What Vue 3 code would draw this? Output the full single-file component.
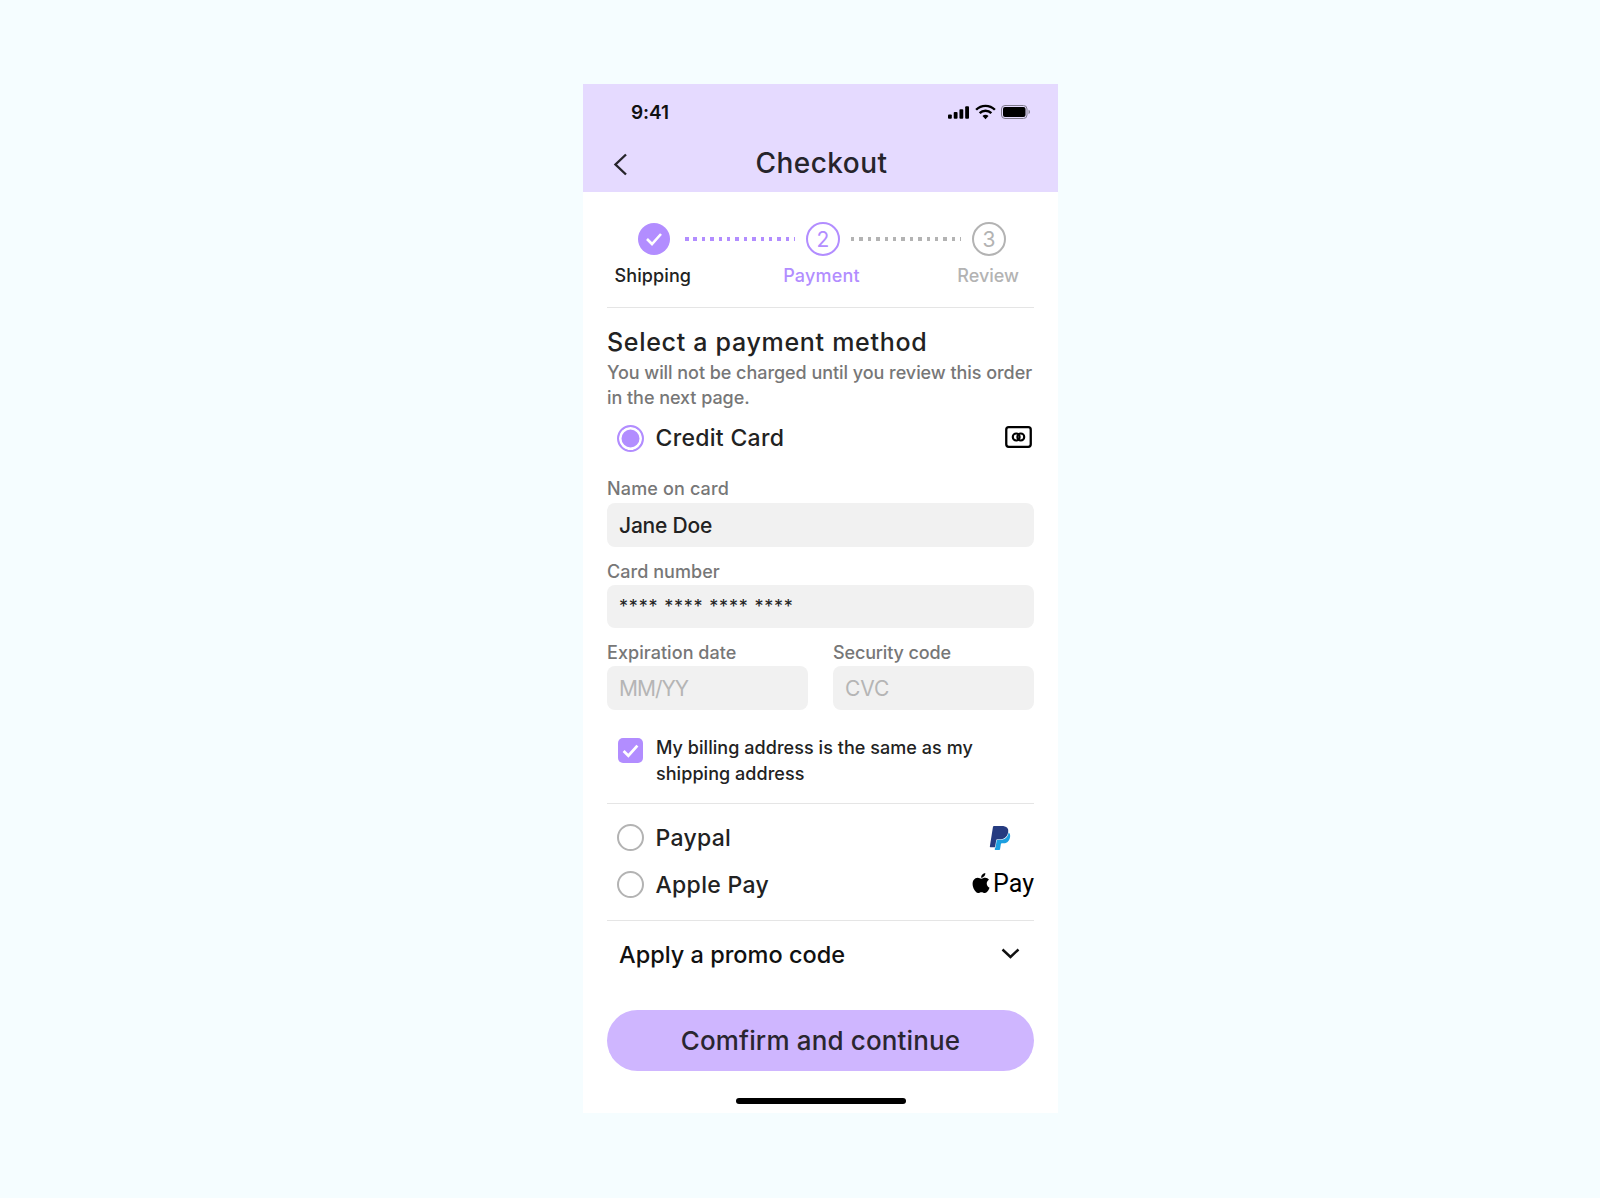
<script setup>
const steps = [
  { label: 'Shipping', cls: 'done' },
  { label: 'Payment', cls: 'active' },
  { label: 'Review', cls: 'todo' }
]
</script>

<template>
  <div class="phone">
    <header class="top">
      <div class="status">
        <span class="time">9:41</span>
        <div class="status-icons">
          <svg width="21" height="13" viewBox="0 0 22 13"><rect x="0" y="8.5" width="4" height="4.5" rx="1"/><rect x="6" y="6" width="4" height="7" rx="1"/><rect x="12" y="3" width="4" height="10" rx="1"/><rect x="18" y="0" width="4" height="13" rx="1"/></svg>
          <svg width="21" height="15.5" viewBox="0 0 19 14" fill="none" stroke="#000" stroke-width="2.2"><path d="M1 5.2a12 12 0 0 1 17 0"/><path d="M4.2 8.3a7.6 7.6 0 0 1 10.6 0"/><path d="M9.5 13.8l-2.7-2.9a3.8 3.8 0 0 1 5.4 0z" fill="#000" stroke="none"/></svg>
          <svg width="29" height="14" viewBox="0 0 29 14"><rect x=".5" y=".5" width="25.5" height="13" rx="3.5" fill="none" stroke="#7f7a8c"/><rect x="2" y="2" width="22.5" height="10" rx="2"/><path d="M27.5 4.8a2.3 2.3 0 0 1 0 4.4z" fill="#8d889a"/></svg>
        </div>
      </div>
      <div class="title-row">
        <svg class="back" width="15" height="23" viewBox="0 0 15 23" fill="none" stroke="#26242b" stroke-width="2.4"><path d="M13 1.5 2.5 11.5 13 21.5"/></svg>
        <h1>Checkout</h1>
      </div>
    </header>

    <main class="body">
      <div class="track">
        <span class="c c-done">
          <svg width="18" height="14" viewBox="0 0 18 14" fill="none" stroke="#fff" stroke-width="2.6"><path d="M2 7l5 5 9-10"/></svg>
        </span>
        <span class="dots purple"></span>
        <span class="c c-active">2</span>
        <span class="dots grey"></span>
        <span class="c c-todo">3</span>
      </div>
      <div class="labels">
        <span v-for="s in steps" :key="s.label" :class="['lbl', s.cls]">{{ s.label }}</span>
      </div>

      <hr class="rule first" />

      <h2>Select a payment method</h2>
      <p class="desc">You will not be charged until you review this order<br />in the next page.</p>

      <div class="option credit">
        <span class="radio on"></span>
        <span class="opt-name">Credit Card</span>
        <svg class="card" width="27" height="22" viewBox="0 0 28 23" fill="none" stroke="#000"><rect x="1.2" y="1.2" width="25.6" height="20.6" rx="2.6" stroke-width="2.4"/><circle cx="11.6" cy="11.5" r="3.6" stroke-width="2.2"/><circle cx="16.4" cy="11.5" r="3.6" stroke-width="2.2"/></svg>
      </div>

      <label class="f-label name">Name on card</label>
      <div class="input jane">Jane Doe</div>
      <label class="f-label">Card number</label>
      <div class="input stars">**** **** **** ****</div>

      <div class="pair">
        <div class="col">
          <label class="f-label">Expiration date</label>
          <div class="input ph mm">MM/YY</div>
        </div>
        <div class="col">
          <label class="f-label sec">Security code</label>
          <div class="input ph">CVC</div>
        </div>
      </div>

      <div class="billing">
        <span class="check">
          <svg width="17" height="14" viewBox="0 0 16 13" fill="none" stroke="#fff" stroke-width="2.6"><path d="M1.5 6.5l4.5 4.5 8.5-9.5"/></svg>
        </span>
        <span class="billing-text">My billing address is the same as my shipping address</span>
      </div>

      <hr class="rule" />

      <div class="option paypal">
        <span class="radio"></span>
        <span class="opt-name">Paypal</span>
        <svg class="pp" width="24" height="24" viewBox="0 0 24 24"><path fill="#1c9fe0" d="M21.222 6.917a3.35 3.35 0 0 0-.607-.541c-.013.076-.026.175-.041.254-.93 4.778-4.005 7.201-9.138 7.201h-2.19a.563.563 0 0 0-.556.479l-1.187 7.527h-.506l-.24 1.516a.56.56 0 0 0 .554.647h3.882c.46 0 .85-.334.922-.788.06-.26.76-4.852.816-5.09a.932.932 0 0 1 .923-.788h.58c3.76 0 6.705-1.528 7.565-5.946.36-1.847.174-3.388-.777-4.471z"/><path fill="#253b80" d="M7.076 21.337H2.47a.641.641 0 0 1-.633-.74L4.944.901C5.026.382 5.474 0 5.998 0h7.46c2.57 0 4.578.543 5.69 1.81 1.01 1.15 1.304 2.42 1.012 4.287-.023.143-.047.288-.077.437-.983 5.05-4.349 6.797-8.647 6.797h-2.19c-.524 0-.968.382-1.05.9l-1.12 7.106z"/></svg>
      </div>
      <div class="option apple">
        <span class="radio"></span>
        <span class="opt-name">Apple Pay</span>
        <span class="apay">
          <svg width="19" height="22" viewBox="3 2.5 17 19"><path d="M17.05 20.28c-.98.95-2.05.8-3.08.35-1.09-.46-2.09-.48-3.24 0-1.44.62-2.2.44-3.06-.35C2.79 15.25 3.51 7.59 9.05 7.31c1.35.07 2.29.74 3.08.8 1.18-.24 2.31-.93 3.57-.84 1.51.12 2.65.72 3.4 1.8-3.12 1.87-2.38 5.98.48 7.13-.57 1.5-1.31 2.99-2.54 4.09zM12.03 7.25c-.15-2.23 1.66-4.07 3.74-4.25.29 2.58-2.34 4.5-3.74 4.25z"/></svg>
          <span class="pay">Pay</span>
        </span>
      </div>

      <hr class="rule third" />

      <div class="promo">
        <span>Apply a promo code</span>
        <svg class="chev" width="19" height="11" viewBox="0 0 19 11" fill="none" stroke="#111" stroke-width="2.4"><path d="M1.5 1.5l8 7.5 8-7.5"/></svg>
      </div>

      <button class="cta">Comfirm and continue</button>
      <div class="home"></div>
    </main>
  </div>
</template>

<style>
html, body { background: #f5fdff; }
</style>

<style scoped>
.phone {
  width: 475px;
  height: 1029px;
  margin: 84px 0 0 583px;
  background: #fff;
  font-family: Inter, "Liberation Sans", sans-serif;
  color: #222;
  overflow: hidden;
}
.top { height: 108px; background: #e5daff; }
.status {
  display: flex;
  justify-content: space-between;
  align-items: center;
  height: 24px;
  padding: 16px 28px 0 48px;
}
.time { font-size: 19px; font-weight: 600; color: #111; letter-spacing: -.1px; }
.status-icons { display: flex; align-items: center; gap: 5.5px; }
.title-row {
  position: relative;
  display: flex;
  justify-content: center;
  padding-top: 17px;
}
.back { position: absolute; left: 30px; top: 29px; }
h1 { margin: 0; font-size: 28px; line-height: 44px; font-weight: 500; color: #26242b; letter-spacing: .45px; margin-left: 2px; }

.body { padding: 0 24px; }
.track { display: flex; align-items: center; padding: 30px 0 0 31px; height: 34px; }
.c {
  display: flex;
  align-items: center;
  justify-content: center;
  box-sizing: border-box;
  width: 34px;
  height: 34px;
  border-radius: 50%;
  font-size: 21px;
}
.c-done { width: 32px; height: 32px; background: #b28dff; }
.c-active { border: 2.5px solid #b28dff; color: #b28dff; }
.c-todo { border: 2.5px solid #b3b3b3; color: #b3b3b3; }
.dots { width: 110px; height: 4px; margin: 0 11px; }
.dots.purple { margin-left: 15px; background: repeating-linear-gradient(90deg, #b28dff 0 3.5px, transparent 3.5px 8.4px); }
.dots.grey { background: repeating-linear-gradient(90deg, #b3b3b3 0 3.5px, transparent 3.5px 8.4px); }
.labels { display: flex; margin-top: 6px; height: 28px; }
.lbl { width: 92px; text-align: center; font-size: 18px; line-height: 28px; font-weight: 450; letter-spacing: .1px; }
.lbl.active { margin-left: 77px; color: #b28dff; letter-spacing: .2px; }
.lbl.todo { margin-left: 75px; color: #b3b3b3; letter-spacing: 0; }

.rule { border: 0; height: 1px; background: #e5e5e5; margin: 0; }
.rule.first { margin-top: 17px; }
h2 { margin: 19px 0 0; font-size: 25px; line-height: 30px; font-weight: 500; color: #222; letter-spacing: .7px; }
.desc { margin: 2.5px 0 0; font-size: 18px; line-height: 25.5px; color: #777; font-weight: 450; white-space: nowrap; letter-spacing: -.05px; }

.option { display: flex; align-items: center; height: 30px; padding-left: 10px; }
.credit { margin-top: 12.5px; }
.paypal { margin-top: 19px; }
.apple { margin-top: 17px; }
.radio { box-sizing: border-box; width: 27px; height: 27px; border: 2.5px solid #b3b3b3; border-radius: 50%; flex: none; }
.radio.on { border-color: #b28dff; background: #b28dff; box-shadow: inset 0 0 0 2.5px #fff; }
.opt-name { margin-left: 11.5px; font-size: 23px; color: #222; flex: 1; font-weight: 450; letter-spacing: .3px; }
.card { margin: -2px 2px 0 0; }
.pp { margin-right: 22px; }
.apay { display: flex; align-items: center; gap: 3px; margin-top: -4px; }
.pay { font-family: Roboto, Inter, sans-serif; font-size: 25px; color: #000; line-height: 30px; margin-top: 2px; }

.f-label { display: block; font-size: 18px; line-height: 26px; color: #777; margin-top: 12px; font-weight: 450; letter-spacing: .05px; }
.f-label.name { margin: 23px 0 1px; letter-spacing: .15px; }
.f-label.sec { letter-spacing: -.15px; }
.input {
  box-sizing: border-box;
  height: 43.5px;
  border-radius: 8px;
  background: #f1f1f1;
  padding: 0 12px;
  font-size: 21px;
  line-height: 45.5px;
  color: #222;
}
.jane { letter-spacing: -.2px; font-weight: 450; }
.stars { font-size: 18px; line-height: 43px; letter-spacing: .8px; }
.ph { color: #b5b5b5; }
.mm { letter-spacing: -1px; }
.pair { display: flex; gap: 25px; }
.col { flex: 1; }

.billing { display: flex; margin-top: 25px; padding-left: 11px; }
.check {
  flex: none;
  display: flex;
  align-items: center;
  justify-content: center;
  width: 25px;
  height: 25px;
  margin-top: 3.5px;
  border-radius: 5px;
  background: #b28dff;
}
.billing-text { margin: 0 0 0 13px; font-size: 18px; line-height: 26px; color: #222; width: 340px; font-weight: 450; letter-spacing: .05px; }
.billing + .rule { margin-top: 16px; }
.rule.third { margin-top: 20px; }

.promo {
  display: flex;
  justify-content: space-between;
  align-items: center;
  height: 30px;
  margin-top: 19px;
  padding: 0 14px 0 12px;
  font-size: 23.5px;
  font-weight: 500;
  color: #111;
}
.chev { margin-top: -3px; }
.cta {
  display: block;
  width: 100%;
  height: 61px;
  margin-top: 40px;
  border: 0;
  border-radius: 31px;
  background: #cfb6ff;
  font: 500 26px Inter, sans-serif;
  letter-spacing: .15px;
  color: #2a2630;
}
.home { width: 170px; height: 6px; margin: 27px 0 0 129px; border-radius: 3px; background: #000; }
</style>
